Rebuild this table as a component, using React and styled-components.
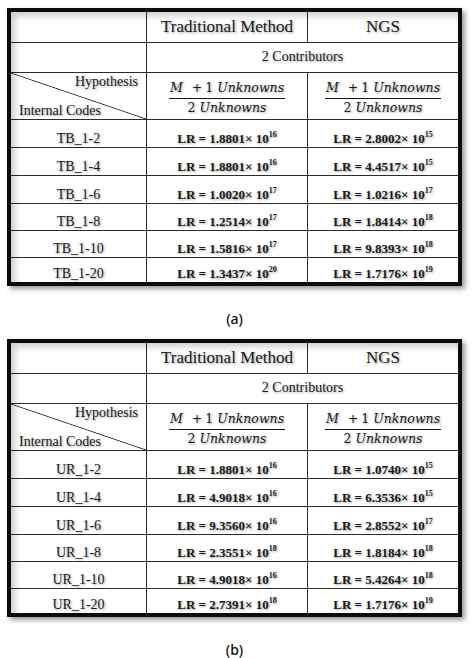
import React from 'react'
import styled, { createGlobalStyle } from 'styled-components'

const figures = [
  {
    caption: '(a)',
    rows: [
      ['TB_1-2', ['1.8801', '16'], ['2.8002', '15']],
      ['TB_1-4', ['1.8801', '16'], ['4.4517', '15']],
      ['TB_1-6', ['1.0020', '17'], ['1.0216', '17']],
      ['TB_1-8', ['1.2514', '17'], ['1.8414', '18']],
      ['TB_1-10', ['1.5816', '17'], ['9.8393', '18']],
      ['TB_1-20', ['1.3437', '20'], ['1.7176', '19']],
    ],
  },
  {
    caption: '(b)',
    rows: [
      ['UR_1-2', ['1.8801', '16'], ['1.0740', '15']],
      ['UR_1-4', ['4.9018', '16'], ['6.3536', '15']],
      ['UR_1-6', ['9.3560', '16'], ['2.8552', '17']],
      ['UR_1-8', ['2.3551', '18'], ['1.8184', '18']],
      ['UR_1-10', ['4.9018', '16'], ['5.4264', '18']],
      ['UR_1-20', ['2.7391', '18'], ['1.7176', '19']],
    ],
  },
]

const Fraction = () => (
  <Frac>
    <Num>
      <I>M</I>
      <Op>+</Op>1 <I>Unknowns</I>
    </Num>
    <Den>
      2 <I>Unknowns</I>
    </Den>
  </Frac>
)

const LR = ({ value }) => (
  <Value>
    LR = {value[0]}× 10<Sup>{value[1]}</Sup>
  </Value>
)

const App = () => {
  return (
    <Page>
      <GlobalStyle />
      {figures.map((fig) => (
        <Figure key={fig.caption}>
          <Table>
            <Cell />
            <Cell $size={17}>Traditional Method</Cell>
            <Cell $size={17}>NGS</Cell>
            <Cell />
            <Cell $span={2}>2 Contributors</Cell>
            <SplitCell>
              <Corner $side="top">Hypothesis</Corner>
              <Corner $side="bottom">Internal Codes</Corner>
            </SplitCell>
            <Cell>
              <Fraction />
            </Cell>
            <Cell>
              <Fraction />
            </Cell>
            {fig.rows.map((row) => (
              <React.Fragment key={row[0]}>
                <Cell $bottom>{row[0]}</Cell>
                <Cell $bottom>
                  <LR value={row[1]} />
                </Cell>
                <Cell $bottom>
                  <LR value={row[2]} />
                </Cell>
              </React.Fragment>
            ))}
          </Table>
          <Caption>{fig.caption}</Caption>
        </Figure>
      ))}
    </Page>
  )
}

export default App

const GlobalStyle = createGlobalStyle`
  body {
    margin: 0;
    background: #ffffff;
    font-family: 'Liberation Serif', 'Times New Roman', serif;
    color: #1a1a1a;
  }
`

const Page = styled.div`
  width: 474px;
  padding: 8px 0 0 7px;
  box-sizing: border-box;
`

const Figure = styled.div`
  width: 455px;
  display: flex;
  flex-direction: column;
`

const Table = styled.div`
  position: relative;
  display: grid;
  grid-template-columns: 135px 160px 150px;
  grid-template-rows: 30px 29px 46px 27px 27px 27px 26px 26px 24px;
  gap: 1px;
  background: #2b2b2b;
  border: 4px solid #0c0c0c;
  box-shadow: 3px 3px 5px rgba(0, 0, 0, 0.4);

  &::after {
    content: '';
    position: absolute;
    inset: 0;
    pointer-events: none;
    box-shadow: inset 4px 4px 7px rgba(0, 0, 0, 0.2);
  }
`

const Cell = styled.div`
  display: flex;
  justify-content: center;
  align-items: ${(p) => (p.$bottom ? 'flex-end' : 'center')};
  grid-column: span ${(p) => p.$span || 1};
  background: #ffffff;
  font-size: ${(p) => p.$size || 14}px;
  line-height: 1.15;
  white-space: nowrap;
  text-shadow: 1px 1px 2.5px rgba(0, 0, 0, 0.38);
`

const SplitCell = styled.div`
  display: flex;
  flex-direction: column;
  justify-content: space-between;
  padding: 0 8px;
  font-size: 14px;
  line-height: 16px;
  text-shadow: 1px 1px 2.5px rgba(0, 0, 0, 0.38);
  background: linear-gradient(
    to top right,
    #ffffff calc(50% - 0.8px),
    #222222 50%,
    #ffffff calc(50% + 0.8px)
  );
`

const Corner = styled.div`
  align-self: ${(p) => (p.$side === 'top' ? 'flex-end' : 'flex-start')};
  margin-top: ${(p) => (p.$side === 'top' ? '1px' : '0')};
`

const Frac = styled.div`
  display: inline-flex;
  flex-direction: column;
  align-items: center;
  margin-top: 3px;
  font-family: 'DejaVu Serif', 'Liberation Serif', serif;
  font-size: 12.5px;
  line-height: 14px;
`

const Num = styled.div`
  padding: 0 1px 3px;
  border-bottom: 1.3px solid #1a1a1a;
`

const Den = styled.div`
  padding-top: 2px;
`

const I = styled.i`
  font-style: italic;
`

const Op = styled.span`
  margin: 0 3px 0 9px;
`

const Value = styled.span`
  font-size: 13px;
  font-weight: bold;
`

const Sup = styled.sup`
  font-size: 8px;
  vertical-align: 6px;
  line-height: 0;
`

const Caption = styled.div`
  padding: 24px 0 11px;
  text-align: center;
  font-family: 'Noto Sans', 'DejaVu Sans', sans-serif;
  font-size: 14px;
  font-weight: 500;
  line-height: 18px;
  color: #111111;
`
